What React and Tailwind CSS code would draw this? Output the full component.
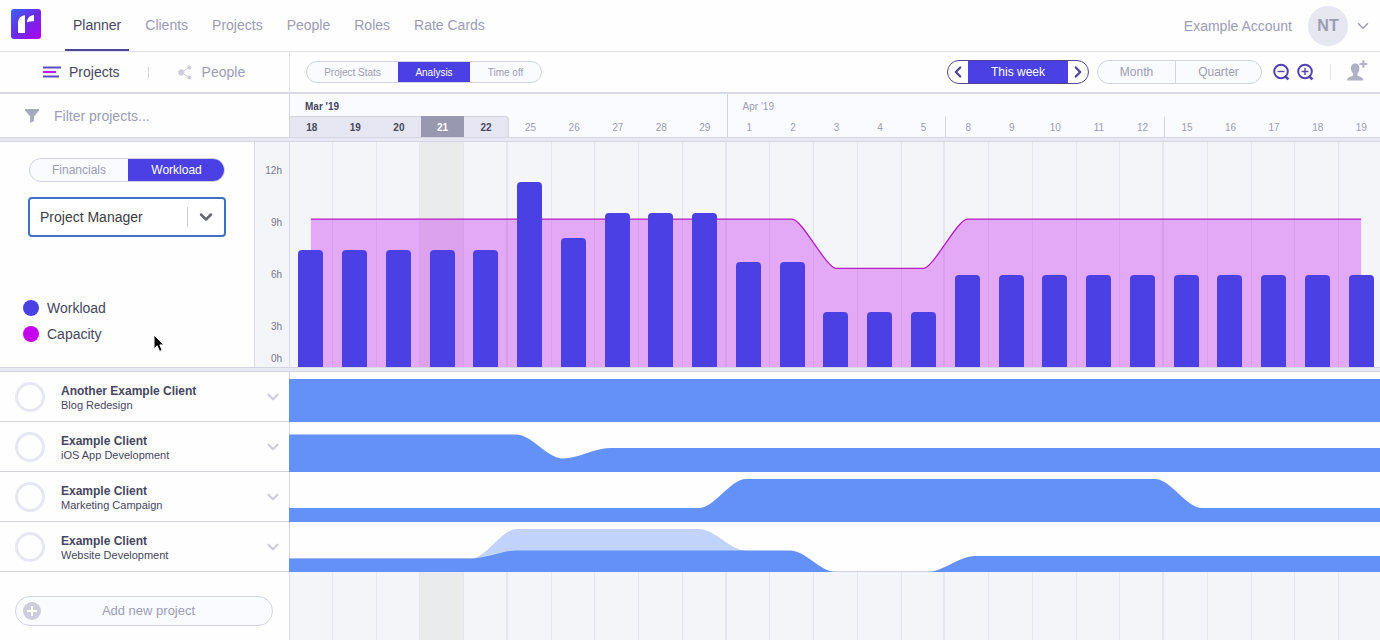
import { ChevronDown, ChevronLeft, ChevronRight } from "lucide-react";
import clsx from "clsx";

const NAV = ["Planner", "Clients", "Projects", "People", "Roles", "Rate Cards"];

const MONTHS = [
  { label: "Mar '19", days: [18, 19, 20, 21, 22, 25, 26, 27, 28, 29] },
  { label: "Apr '19", days: [1, 2, 3, 4, 5, 8, 9, 10, 11, 12, 15, 16, 17, 18, 19] },
];

const TODAY = 3;
const MAX_HOURS = 18.25;

const WORKLOAD = [
  9.5, 9.5, 9.5, 9.5, 9.5, 15, 10.5, 12.5, 12.5, 12.5, 8.5, 8.5, 4.5, 4.5, 4.5,
  7.5, 7.5, 7.5, 7.5, 7.5, 7.5, 7.5, 7.5, 7.5, 7.5,
];

const CAPACITY = WORKLOAD.map((_, i) => (i >= 12 && i <= 14 ? 8 : 12));

// Points are [x, y] on a 1094 x 50 canvas.
const PROJECTS = [
  { client: "Another Example Client", name: "Blog Redesign", area: [[0, 7], [1094, 7]] },
  {
    client: "Example Client",
    name: "iOS App Development",
    area: [[0, 12.5], [227, 12.5], [274, 36.5], [321, 26], [1094, 26]],
  },
  {
    client: "Example Client",
    name: "Marketing Campaign",
    area: [[0, 36], [410, 36], [457, 7], [866, 7], [913, 36], [1094, 36]],
  },
  {
    client: "Example Client",
    name: "Website Development",
    tentative: [[0, 36.5], [182, 36.5], [228, 7], [410, 7], [457, 28.5], [480, 50]],
    area: [[0, 36.5], [182, 36.5], [228, 28.5], [501, 28.5], [547, 50], [638, 50], [686, 34], [1094, 34]],
  },
];

function curve(points, tension = 1 / 3) {
  return points
    .map(([x, y], i) => {
      if (i === 0) return `M${x} ${y}`;
      const [px, py] = points[i - 1];
      const reach = (x - px) * tension;
      return `C${px + reach} ${py} ${x - reach} ${y} ${x} ${y}`;
    })
    .join("");
}

function area(points, bottom, tension) {
  return `${curve(points, tension)}V${bottom}H${points[0][0]}Z`;
}

function Logo() {
  return (
    <svg className="h-[30px] w-[30px]" viewBox="0 0 30 30" aria-hidden="true">
      <defs>
        <linearGradient id="logo" x1="0" y1="0" x2="1" y2="1">
          <stop offset="0" stopColor="#3a62f2" />
          <stop offset="0.5" stopColor="#6a2be8" />
          <stop offset="1" stopColor="#b400f4" />
        </linearGradient>
      </defs>
      <rect width="30" height="30" rx="3" fill="url(#logo)" />
      <path d="M7 24V14C7 9.6 9.8 6.4 14 6.2V24Z" fill="#fff" />
      <path d="M16 13.4C16 9.2 19 6.2 23 6V12.2C20.5 12.2 18 12.4 16 13.4Z" fill="#fff" />
    </svg>
  );
}

function ZoomIcon({ plus }) {
  return (
    <svg className="h-[18px] w-[18px]" viewBox="0 0 18 18" fill="none" stroke="currentColor">
      <circle cx="9" cy="8.5" r="6.8" strokeWidth="2" />
      <path d="M12.8 12.8L16.4 16.4" strokeWidth="2.6" />
      <path d={plus ? "M5.5 8.5H12.5M9 5V12" : "M5.5 8.5H12.5"} strokeWidth="1.4" />
    </svg>
  );
}

function AddUserIcon() {
  return (
    <svg className="h-[21px] w-[21px]" viewBox="0 0 21 21" fill="currentColor">
      <path d="M8.2 3.6C5.2 3.6 3.8 5.7 4 8.6C4.1 11 4.9 12.6 6 13.5V15.2C5.2 16.5 .8 16.6 .2 19.2V20.4H16.2V19.2C15.6 16.6 11.2 16.5 10.4 15.2V13.5C11.5 12.6 12.3 11 12.4 8.6C12.6 5.7 11.2 3.6 8.2 3.6Z" />
      <path d="M15.3 .2H17.3V2.9H20.2V4.9H17.3V7.8H15.3V4.9H12.6V2.9H15.3Z" />
    </svg>
  );
}

function TopNav() {
  return (
    <header className="flex h-[52px] items-stretch border-b border-[#e2e2ec] pl-[11px] pr-2">
      <a href="#home" aria-label="Home" className="mt-[9px]">
        <Logo />
      </a>
      <nav className="ml-6 flex gap-2 text-sm">
        {NAV.map((item, i) => (
          <a
            key={item}
            href={`#${item}`}
            className={clsx(
              "flex items-center border-b-2 px-2",
              i === 0 ? "border-[#4f4795] text-[#46465f]" : "border-transparent text-[#9c9cb4]"
            )}
          >
            {item}
          </a>
        ))}
      </nav>
      <div className="ml-auto flex items-center text-sm text-[#9c9cb4]">
        <span>Example Account</span>
        <button className="ml-4 flex items-center gap-[6px]" aria-label="Account menu">
          <span className="grid h-10 w-10 place-items-center rounded-full bg-[#e7e7f2] text-base font-bold text-[#9b9bb3]">
            NT
          </span>
          <ChevronDown className="h-[18px] w-[18px]" strokeWidth={2} />
        </button>
      </div>
    </header>
  );
}

function Toolbar() {
  return (
    <div className="flex h-[42px] border-b-2 border-[#d9d9e6]">
      <div className="flex w-[290px] shrink-0 items-center border-r border-[#e2e2ec] pl-[43px] text-sm">
        <button className="flex items-center gap-2 text-[#46465f]">
          <svg className="h-3 w-[18px]" viewBox="0 0 18 12" fill="none" strokeWidth="2">
            <path d="M0 1.5H18" stroke="#5a48c8" />
            <path d="M0 6H13" stroke="#c01ce0" />
            <path d="M0 10.5H16" stroke="#5a48c8" />
          </svg>
          Projects
        </button>
        <span className="ml-7 h-[11px] w-px bg-[#d3d3df]" />
        <button className="ml-[29px] flex items-center gap-[10px] text-[#9c9cb4]">
          <svg className="h-[15px] w-[14px]" viewBox="0 0 14 15" fill="#cdcddd" stroke="#cdcddd">
            <path d="M11 2.5L3.5 7.5L11 12.5" fill="none" strokeWidth="1" />
            <circle cx="3.2" cy="7.5" r="2.7" />
            <circle cx="11.3" cy="2.5" r="1.6" />
            <circle cx="11.3" cy="12.5" r="1.6" />
          </svg>
          People
        </button>
      </div>

      <div className="flex flex-1 items-center justify-between pl-4 pr-3">
        <div className="flex h-[22px] overflow-hidden rounded-full border border-[#d3d3e2] bg-[#fafbfe] text-[10px] text-[#9c9cb4]">
          <button className="w-[91px]">Project Stats</button>
          <button className="-my-px w-[72px] bg-[#4a40e4] text-white">Analysis</button>
          <button className="w-[71px]">Time off</button>
        </div>

        <div className="flex items-center text-xs">
          <div className="flex h-6 overflow-hidden rounded-full border border-[#4f4795] text-[#4f4795]">
            <button className="grid w-5 place-items-center" aria-label="Previous week">
              <ChevronLeft className="h-[18px] w-[18px]" strokeWidth={3} />
            </button>
            <button className="-my-px w-[100px] bg-[#4a40e4] text-white">This week</button>
            <button className="grid w-5 place-items-center" aria-label="Next week">
              <ChevronRight className="h-[18px] w-[18px]" strokeWidth={3} />
            </button>
          </div>
          <div className="ml-2 flex h-6 overflow-hidden rounded-full border border-[#d3d3e2] bg-[#fafbfe] text-[#9c9cb4]">
            <button className="w-[78px] border-r border-[#d3d3e2]">Month</button>
            <button className="w-[85px]">Quarter</button>
          </div>
          <button className="ml-[10px] text-[#4f43b4]" aria-label="Zoom out">
            <ZoomIcon />
          </button>
          <button className="ml-[6px] text-[#4f43b4]" aria-label="Zoom in">
            <ZoomIcon plus />
          </button>
          <span className="mx-4 h-4 w-px bg-[#e2e2ec]" />
          <button className="-mt-1 text-[#b0b0c4]" aria-label="Add person">
            <AddUserIcon />
          </button>
        </div>
      </div>
    </div>
  );
}

function DateHeader() {
  return (
    <div className="flex h-[43px]">
      <div className="flex w-[289px] shrink-0 items-center gap-[15px] pl-[25px]">
        <svg className="h-[14px] w-[14px]" viewBox="0 0 14 14" fill="#a9a9bd" aria-hidden="true">
          <path d="M0 0H14V1.5L9 7.5V12L5.2 14V7.5L0 1.5Z" />
        </svg>
        <input
          type="text"
          aria-label="Filter projects"
          placeholder="Filter projects..."
          className="w-[200px] bg-transparent text-sm outline-none placeholder:text-[#9c9cb4]"
        />
      </div>
      <div className="min-w-0 flex-1 overflow-hidden bg-[#fafbfe] text-[10px]">
        <div className="grid h-full w-[calc(100%+3px)] grid-cols-25">
          {MONTHS.map((month, m) => (
            <div
              key={month.label}
              className={clsx("flex flex-col border-l border-[#d3d3e2]", m === 0 ? "col-span-10" : "col-span-15")}
            >
              <div
                className={clsx(
                  "flex h-[22px] items-center pl-[15px] pt-[2px]",
                  m === 0 ? "font-bold text-[#46465f]" : "text-[#9c9cb4]"
                )}
              >
                {month.label}
              </div>
              <div className="flex flex-1">
                {month.days.map((day, i) => {
                  const thisWeek = m === 0 && i < 5;
                  const isToday = m === 0 && i === TODAY;
                  return (
                    <div
                      key={day}
                      className={clsx(
                        "flex flex-1 items-center justify-center border-t pt-px",
                        thisWeek && "font-bold",
                        thisWeek && !isToday && "border-t-[#d3d3e2] bg-[#e6e6f2] text-[#46465f]",
                        isToday && "border-t-[#9898b0] bg-[#9898b0] text-white",
                        !thisWeek && "border-t-transparent text-[#9c9cb4]",
                        thisWeek && i === 4 && "rounded-tr-sm border-r border-r-[#d3d3e2]",
                        m === 1 && (i === 4 || i === 9) && "border-r border-r-[#d3d3e2]"
                      )}
                    >
                      {day}
                    </div>
                  );
                })}
              </div>
            </div>
          ))}
        </div>
      </div>
    </div>
  );
}

function Band() {
  return <div className="h-[5px] border-y border-[#d5d5e3] bg-[#e8e8f2]" />;
}

function DayColumns() {
  return (
    <div className="absolute inset-0 grid grid-cols-25">
      {WORKLOAD.map((_, i) => (
        <div
          key={i}
          className={clsx(
            "border-[#e5e6ee]",
            i === 0 && "border-l border-l-[#dcdce8]",
            i % 5 === 4 ? "border-r-2" : "border-r",
            i === TODAY && "bg-[#eaebed]"
          )}
        />
      ))}
    </div>
  );
}

function WorkloadPanel() {
  return (
    <div className="relative flex w-[254px] shrink-0 flex-col pl-7">
      <div className="ml-px mt-4 flex h-6 w-[196px] overflow-hidden rounded-full border border-[#d3d3e2] bg-[#fafbfe] text-xs">
        <button className="flex-1 text-[#9c9cb4]">Financials</button>
        <button className="-my-px -mr-px w-[97px] bg-[#4a40e4] text-white">Workload</button>
      </div>
      <div className="relative mt-[15px] w-[198px]">
        <select
          aria-label="Role"
          className="block h-10 w-full appearance-none rounded border-2 border-[#3b74c6] bg-white pl-[10px] pr-10 text-sm text-[#3c3c44] outline-none"
        >
          <option>Project Manager</option>
        </select>
        <span className="pointer-events-none absolute inset-y-[10px] right-[10px] flex w-[29px] items-center justify-end border-l border-[#cccccc]">
          <ChevronDown className="h-5 w-5 text-[#666670]" strokeWidth={3} />
        </span>
      </div>
      <ul className="-ml-[5px] mt-[58px] flex flex-col text-sm text-[#46465f]">
        <li className="flex h-[26px] items-center gap-2">
          <span className="h-4 w-4 rounded-full bg-[#4a40e4]" />
          Workload
        </li>
        <li className="flex h-[26px] items-center gap-2">
          <span className="h-4 w-4 rounded-full bg-[#c400f0]" />
          Capacity
        </li>
      </ul>
      <svg className="absolute left-[153px] top-[192px] h-[19px] w-3" viewBox="0 0 12 19" aria-hidden="true">
        <path
          d="M1 1V14.8L4.2 11.8L6.6 17.4L9.2 16.3L6.8 10.9H11Z"
          fill="#000"
          stroke="#fff"
          strokeWidth="1"
        />
      </svg>
    </div>
  );
}

function WorkloadChart() {
  const step = 1094 / CAPACITY.length;
  const points = CAPACITY.map((hours, i) => [step * i + step / 2, 225 - (hours / MAX_HOURS) * 225]);

  return (
    <div className="flex h-[225px]">
      <WorkloadPanel />
      <div className="w-[35px] shrink-0 border-l border-[#d9d9e6] bg-[#f4f5f9] pr-[7px] pt-[3px] text-right text-[10px] text-[#77778a]">
        {["12h", "9h", "6h", "3h"].map((tick) => (
          <div key={tick} className="h-[52px] leading-[52px]">
            {tick}
          </div>
        ))}
        <div className="leading-[12px]">0h</div>
      </div>
      <div className="min-w-0 flex-1 overflow-hidden bg-[#f4f5f9]">
        <div className="relative h-full w-[calc(100%+3px)]">
          <DayColumns />
          <svg className="absolute inset-0 h-full w-full" viewBox="0 0 1094 225" preserveAspectRatio="none">
            <path d={area(points, 225, 0.22)} fill="#c000f2" fillOpacity="0.31" />
            <path d={curve(points, 0.22)} fill="none" stroke="#b31fc0" strokeWidth="1.3" />
          </svg>
          <div className="relative grid h-full grid-cols-25 items-end justify-items-center">
            {WORKLOAD.map((hours, i) => (
              <div
                key={i}
                className="w-[25px] rounded-t bg-[#4a40e4]"
                style={{ height: `${(hours / MAX_HOURS) * 100}%` }}
              />
            ))}
          </div>
        </div>
      </div>
    </div>
  );
}

function ProjectRow({ project }) {
  return (
    <li className="flex h-[50px]">
      <div className="flex w-[290px] shrink-0 items-center border-b border-r border-[#d3d3dd] pl-[15px] pr-[7px]">
        <span className="h-[30px] w-[30px] rounded-full border-3 border-[#e7e7f2]" />
        <div className="ml-4 flex-1 pt-[3px] text-[#46465f]">
          <div className="text-xs leading-[14px] font-bold">{project.client}</div>
          <div className="text-[11px] leading-[14px]">{project.name}</div>
        </div>
        <button className="text-[#cfcfda]" aria-label={`Expand ${project.name}`}>
          <ChevronDown className="h-[18px] w-[18px]" strokeWidth={3} />
        </button>
      </div>
      <div className="relative -ml-px min-w-0 flex-1 overflow-hidden">
        <svg className="block h-full w-[calc(100%+3px)]" viewBox="0 0 1094 50" preserveAspectRatio="none">
          <path d="M0 49.5H1094" stroke="#d3d3dd" />
          {project.tentative && <path d={area(project.tentative, 50)} fill="#c1d2fb" />}
          <path d={area(project.area, 50)} fill="#6391f8" />
        </svg>
      </div>
    </li>
  );
}

export default function App() {
  return (
    <div className="flex min-h-screen flex-col bg-[#fefefe] font-['Liberation_Sans',Arial,sans-serif]">
      <TopNav />
      <Toolbar />
      <DateHeader />
      <Band />
      <WorkloadChart />
      <Band />
      <ul>
        {PROJECTS.map((project) => (
          <ProjectRow key={project.name} project={project} />
        ))}
      </ul>
      <div className="flex flex-1">
        <div className="w-[289px] shrink-0 px-[15px] pt-6">
          <button className="flex h-[30px] w-[258px] items-center rounded-full border border-[#d3d3e2] bg-[#fafbfe] pl-[7px] text-[13px] text-[#9c9cb4]">
            <svg className="h-[18px] w-[18px]" viewBox="0 0 18 18" aria-hidden="true">
              <circle cx="9" cy="9" r="9" fill="#cdcddb" />
              <path d="M9 4V14M4 9H14" stroke="#fff" strokeWidth="2" />
            </svg>
            <span className="flex-1 pr-4">Add new project</span>
          </button>
        </div>
        <div className="min-w-0 flex-1 overflow-hidden bg-[#f4f5f9]">
          <div className="relative h-full w-[calc(100%+3px)]">
            <DayColumns />
          </div>
        </div>
      </div>
    </div>
  );
}
